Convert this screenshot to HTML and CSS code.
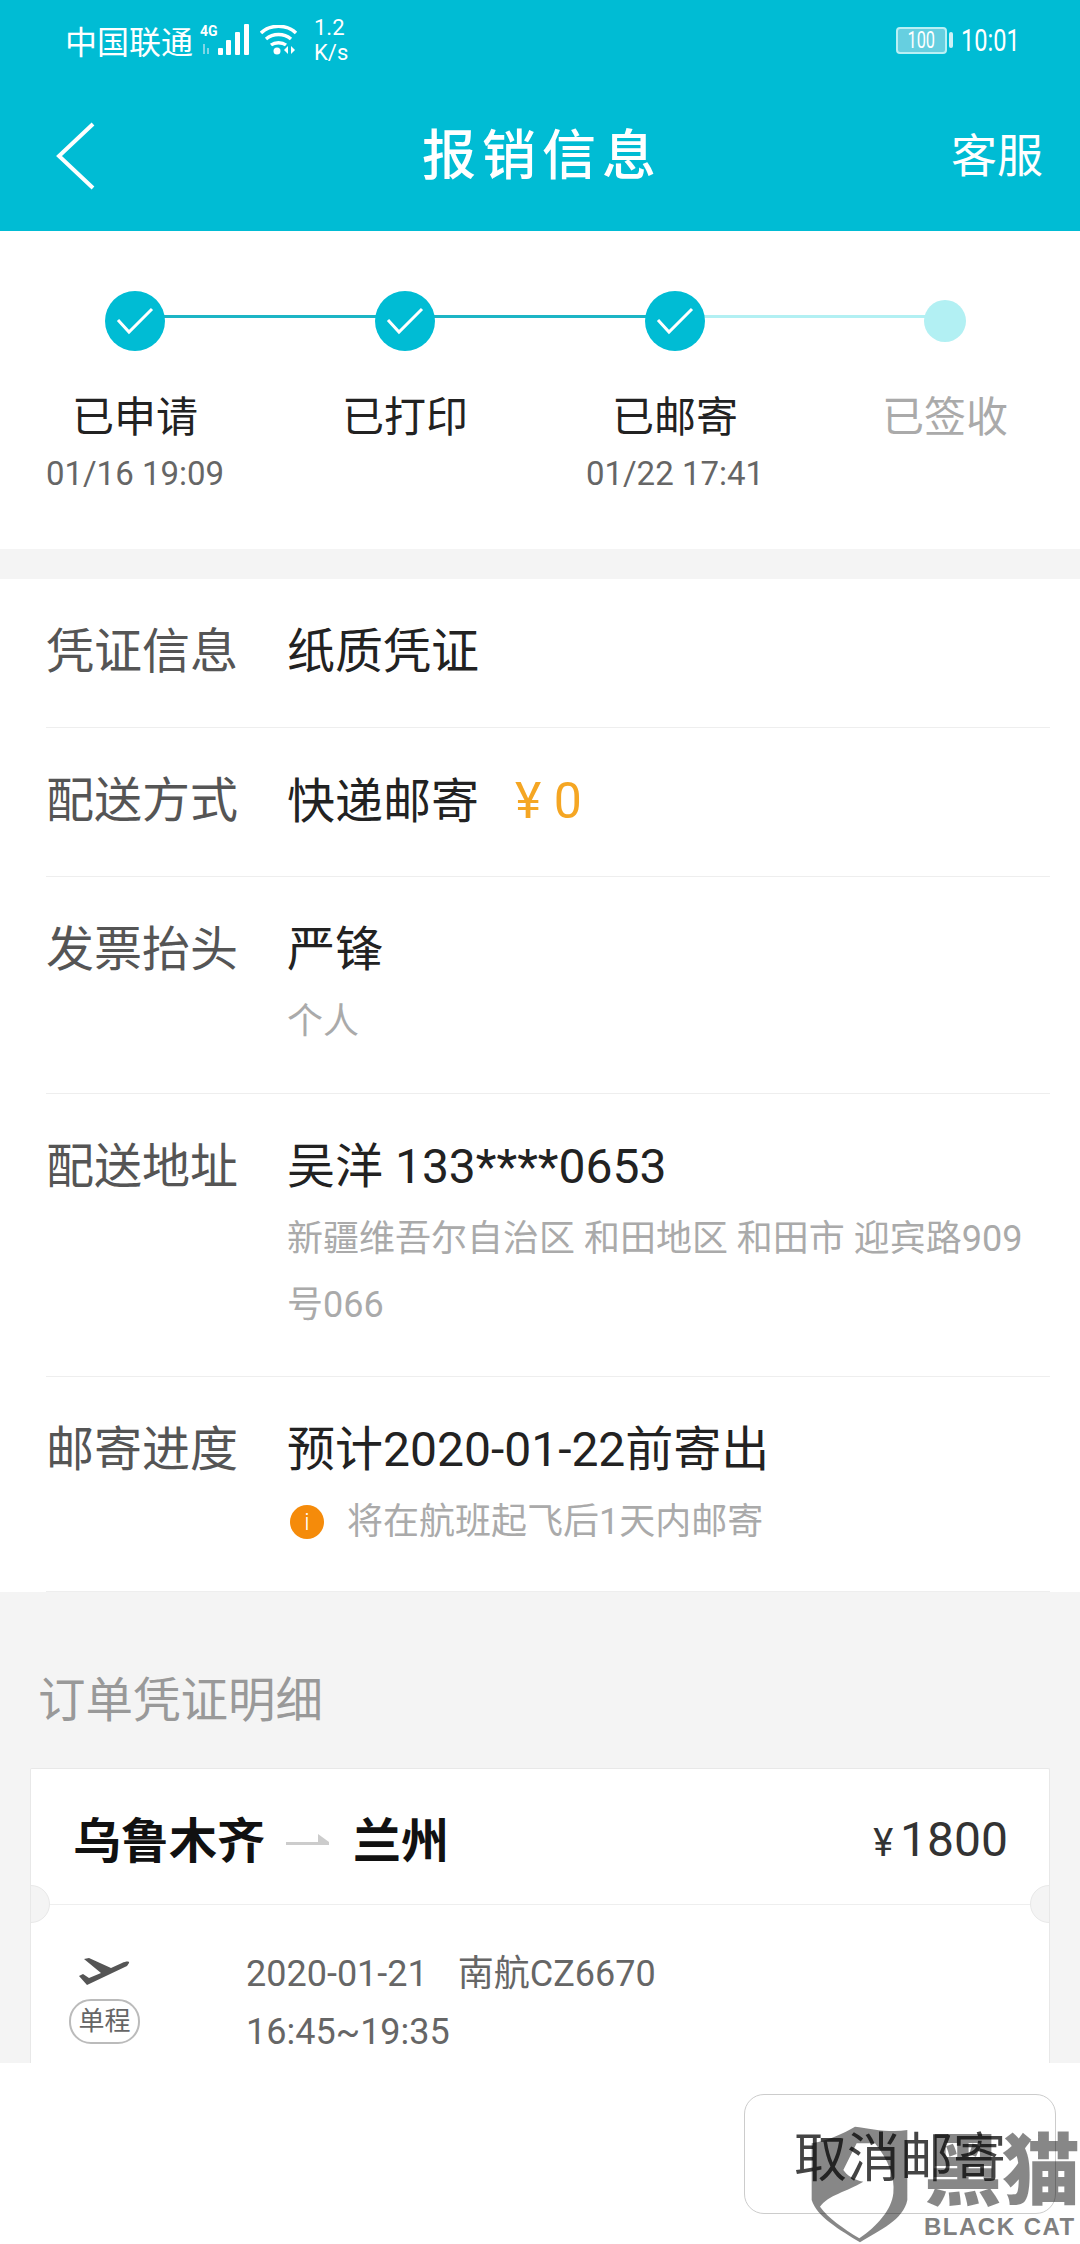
FILE: index.html
```html
<!DOCTYPE html>
<html lang="zh-CN">
<head>
    <meta charset="UTF-8">
    <meta name="viewport" content="width=device-width, initial-scale=1.0">
    <title>报销信息</title>
    <link rel="stylesheet" href="styles.css">
</head>
<body>
    <div class="page">
        <header class="top">
            <div class="status">
                <div class="status-left">
                    <span class="carrier">中国联通</span>
                    <svg class="signal" width="52" height="34" viewBox="0 0 52 34">
                        <text x="1" y="13" class="net">4G</text>
                        <path d="M4 21h2v10H4zM8 25h2v6H8z" fill="#7fd6e6"/>
                        <rect x="19" y="25" width="5" height="7" rx="1" fill="#fff"/>
                        <rect x="27" y="17" width="5" height="15" rx="1" fill="#fff"/>
                        <rect x="36" y="9" width="5" height="23" rx="1" fill="#fff"/>
                        <rect x="45" y="1" width="5" height="31" rx="1" fill="#fff"/>
                    </svg>
                    <svg class="wifi" width="38" height="30" viewBox="0 0 38 30">
                        <path d="M1 8C10-1 27-1 36 8M6 14c7-6 18-6 25 0M11 20c4-3 11-3 15 0" fill="none" stroke="#fff" stroke-width="3.4"/>
                        <circle cx="17" cy="26" r="3.5" fill="#fff"/>
                        <path d="M28 21v8l-4-4zM31 21v8l4-4z" fill="#fff"/>
                    </svg>
                    <div class="speed"><span>1.2</span><span>K/s</span></div>
                </div>
                <div class="status-right">
                    <div class="battery"><span>100</span></div>
                    <span class="battery-tip"></span>
                    <span class="clock">10:01</span>
                </div>
            </div>
            <div class="nav">
                <svg class="back" width="40" height="68" viewBox="0 0 40 68">
                    <path d="M37 2L3 34l34 32" fill="none" stroke="#fff" stroke-width="4"/>
                </svg>
                <h1 class="nav-title">报销信息</h1>
                <span class="nav-link">客服</span>
            </div>
        </header>

        <section class="steps">
            <div class="step done">
                <div class="dot-row">
                    <span class="dot"><svg width="38" height="28" viewBox="0 0 38 28"><path d="M2 13l11 12L36 2" fill="none" stroke="#fff" stroke-width="3"/></svg></span>
                </div>
                <div class="step-name">已申请</div>
                <div class="step-time">01/16 19:09</div>
            </div>
            <div class="step done">
                <div class="dot-row">
                    <span class="dot"><svg width="38" height="28" viewBox="0 0 38 28"><path d="M2 13l11 12L36 2" fill="none" stroke="#fff" stroke-width="3"/></svg></span>
                </div>
                <div class="step-name">已打印</div>
            </div>
            <div class="step done next-off">
                <div class="dot-row">
                    <span class="dot"><svg width="38" height="28" viewBox="0 0 38 28"><path d="M2 13l11 12L36 2" fill="none" stroke="#fff" stroke-width="3"/></svg></span>
                </div>
                <div class="step-name">已邮寄</div>
                <div class="step-time">01/22 17:41</div>
            </div>
            <div class="step off">
                <div class="dot-row"><span class="dot"></span></div>
                <div class="step-name">已签收</div>
            </div>
        </section>

        <section class="info">
            <div class="row">
                <div class="row-label">凭证信息</div>
                <div class="row-body"><div class="row-value">纸质凭证</div></div>
            </div>
            <div class="row">
                <div class="row-label">配送方式</div>
                <div class="row-body"><div class="row-value">快递邮寄<span class="fee">¥ 0</span></div></div>
            </div>
            <div class="row">
                <div class="row-label">发票抬头</div>
                <div class="row-body">
                    <div class="row-value">严锋</div>
                    <div class="row-sub">个人</div>
                </div>
            </div>
            <div class="row">
                <div class="row-label">配送地址</div>
                <div class="row-body">
                    <div class="row-value">吴洋 133****0653</div>
                    <div class="row-sub">新疆维吾尔自治区 和田地区 和田市 迎宾路909号066</div>
                </div>
            </div>
            <div class="row">
                <div class="row-label">邮寄进度</div>
                <div class="row-body">
                    <div class="row-value">预计2020-01-22前寄出</div>
                    <div class="row-sub notice"><span class="info-icon">i</span>将在航班起飞后1天内邮寄</div>
                </div>
            </div>
        </section>

        <section class="detail">
            <h2 class="detail-title">订单凭证明细</h2>
            <div class="card">
                <div class="card-head">
                    <div class="route">
                        <span>乌鲁木齐</span>
                        <svg class="route-arrow" width="44" height="12" viewBox="0 0 44 12"><path d="M0 8h32V0l11 8v3H0z" fill="#ccc"/></svg>
                        <span>兰州</span>
                    </div>
                    <div class="price"><span class="yen">¥</span>1800</div>
                </div>
                <div class="card-body">
                    <div class="trip-type">
                        <svg width="54" height="30" viewBox="0 0 54 30">
                            <path d="M51 6L49 9 9 28 1 19 5 17 11 21 23 16 6 2 11 1 33 11 44 6C48 4 52 4 51 6Z" fill="#555"/>
                        </svg>
                        <span class="pill">单程</span>
                    </div>
                    <div class="trip-text">
                        <div><span class="trip-date">2020-01-21</span>南航CZ6670</div>
                        <div>16:45~19:35</div>
                    </div>
                </div>
            </div>
        </section>

        <footer class="bottom">
            <button class="cancel">取消邮寄</button>
        </footer>

        <div class="watermark">
            <svg class="mark-shield" width="130" height="134" viewBox="0 0 390 402">
                <path fill-rule="evenodd" d="M35 100C90 90 130 70 165 50 210 55 270 70 322 60V270C310 330 240 360 180 397 120 360 50 320 35 270ZM170 100L225 100C265 150 285 200 280 250 275 300 230 350 178 385 130 355 85 325 60 290 85 255 140 245 190 215 160 210 140 195 130 180Z" fill="rgba(0,0,0,.47)"/>
            </svg>
            <div class="mark-text">
                <div class="mark-cn">黑猫</div>
                <div class="mark-en">BLACK CAT</div>
            </div>
        </div>
    </div>
</body>
</html>
```

FILE: styles.css
```css
* {
    box-sizing: border-box;
}

body {
    margin: 0;
    background: #fff;
    font-family: Roboto, "Noto Sans CJK SC", sans-serif;
}

.page {
    position: relative;
    width: 1080px;
    height: 2244px;
    overflow: hidden;
    display: flex;
    flex-direction: column;
    background: #f4f4f4;
}

/* header */
.top {
    height: 231px;
    background: #00bcd4;
    color: #fff;
    flex-shrink: 0;
}

.status {
    height: 80px;
    display: flex;
    justify-content: space-between;
    align-items: center;
    padding: 0 59px 0 65px;
}

.status-left,
.status-right {
    display: flex;
    align-items: center;
}

.carrier {
    font-size: 32px;
    width: 134px;
    font-family: "Noto Sans CJK SC", sans-serif;
}

.net {
    font: bold 14px Roboto, sans-serif;
    fill: #fff;
}

.wifi {
    margin-left: 9px;
}

.speed {
    display: flex;
    flex-direction: column;
    margin-left: 16px;
    font-size: 22px;
    line-height: 25px;
}

.battery {
    width: 51px;
    height: 27px;
    border: 2px solid #b8f0f5;
    border-radius: 4px;
    background: #66cfe0;
    display: flex;
    align-items: center;
    justify-content: center;
    font-size: 24px;
}

.battery span {
    display: inline-block;
    transform: scaleX(0.68);
}

.battery-tip {
    width: 4px;
    height: 16px;
    margin-left: 2px;
    border-radius: 2px;
    background: #cdf1f6;
}

.clock {
    font-size: 31px;
    margin-left: 8px;
    width: 60px;
    display: inline-block;
    transform: scaleX(0.76);
    transform-origin: left center;
    white-space: nowrap;
}

.nav {
    height: 151px;
    display: flex;
    align-items: center;
    justify-content: space-between;
    padding: 0 37px 0 56px;
}

.nav-title {
    margin: 0 0 8px 37px;
    font-size: 54px;
    font-weight: 500;
    letter-spacing: 6px;
}

.nav-link {
    margin-bottom: 8px;
    font-size: 46px;
}

/* progress */
.steps {
    height: 318px;
    background: #fff;
    display: flex;
    padding: 60px 0 0;
    flex-shrink: 0;
}

.step {
    width: 270px;
    display: flex;
    flex-direction: column;
    align-items: center;
}

.dot-row {
    position: relative;
    width: 100%;
    height: 60px;
    display: flex;
    align-items: center;
    justify-content: center;
}

.done .dot-row::after {
    content: "";
    position: absolute;
    left: 50%;
    top: 24px;
    width: 100%;
    height: 3px;
    background: #1cb5c5;
}

.next-off .dot-row::after {
    background: #b2f0f3;
}

.dot {
    position: relative;
    z-index: 1;
    display: flex;
    align-items: center;
    justify-content: center;
    width: 60px;
    height: 60px;
    border-radius: 50%;
    background: #00bcd4;
}

.off .dot {
    width: 42px;
    height: 42px;
    background: #b2f0f3;
}

.step-name {
    margin-top: 40px;
    font-size: 42px;
    line-height: 54px;
    color: #222;
}

.off .step-name {
    color: #aaa;
}

.step-time {
    margin-top: 10px;
    font-size: 33px;
    line-height: 38px;
    color: #666;
}

/* info rows */
.info {
    margin-top: 30px;
    background: #fff;
    padding: 0 30px 0 46px;
    flex-shrink: 0;
}

.row {
    display: flex;
    min-height: 149px;
    padding: 40px 0 38px;
    border-bottom: 1px solid #eee;
}

.row:last-child {
    padding-bottom: 36px;
}

.row-label {
    width: 241px;
    font-size: 48px;
    line-height: 66px;
    color: #555;
    flex-shrink: 0;
}

.row-body {
    padding-right: 14px;
}

.row-value {
    font-size: 48px;
    line-height: 66px;
    color: #222;
    white-space: nowrap;
}

.fee {
    margin-left: 36px;
    color: #f5a623;
    font-size: 50px;
}

.row-sub {
    margin-top: 6px;
    font-size: 36px;
    line-height: 66px;
    color: #aaa;
}

.notice {
    display: flex;
    align-items: center;
    white-space: nowrap;
}

.info-icon {
    width: 34px;
    height: 34px;
    margin: 0 23px 0 3px;
    border-radius: 50%;
    background: #f58b0a;
    color: #fff;
    font-size: 24px;
    font-weight: 300;
    line-height: 34px;
    text-align: center;
}

/* order detail */
.detail {
    flex: 1;
    min-height: 0;
    overflow: hidden;
    padding: 0 30px;
}

.detail-title {
    margin: 76px 0 34px 8px;
    font-size: 47.5px;
    line-height: 66px;
    font-weight: 400;
    color: #999;
}

.card {
    position: relative;
    overflow: hidden;
    background: #fff;
    border: 1px solid #e8e8e8;
    border-bottom: none;
    border-radius: 2px 2px 0 0;
}

.card-head {
    position: relative;
    height: 136px;
    display: flex;
    align-items: center;
    justify-content: space-between;
    padding: 6px 41px 0 42px;
    border-bottom: 1px solid #eee;
}

.card-head::before,
.card-head::after {
    content: "";
    position: absolute;
    bottom: -19px;
    width: 36px;
    height: 36px;
    border-radius: 50%;
    border: 1px solid #e8e8e8;
    background: #f4f4f4;
}

.card-head::before {
    left: -19px;
}

.card-head::after {
    right: -19px;
}

.route {
    display: flex;
    align-items: center;
    margin-top: -6px;
    font-size: 48px;
    font-weight: 700;
    color: #111;
}

.route-arrow {
    margin: 6px 23px 0 21px;
}

.price {
    font-size: 48px;
    color: #333;
    display: flex;
    align-items: baseline;
}

.yen {
    font-size: 38px;
    margin-right: 7px;
}

.card-body {
    display: flex;
    height: 240px;
    padding: 52px 0 0 38px;
}

.trip-type {
    width: 71px;
    display: flex;
    flex-direction: column;
    align-items: center;
    gap: 12px;
}

.pill {
    width: 71px;
    height: 45px;
    border: 2px solid #bbb;
    border-radius: 22px;
    font-size: 26px;
    line-height: 40px;
    text-align: center;
    color: #666;
}

.trip-text {
    margin: -12px 0 0 106px;
    font-size: 36px;
    line-height: 58px;
    color: #666;
}

.trip-date {
    margin-right: 30px;
}

/* footer */
.bottom {
    height: 181px;
    background: #fff;
    display: flex;
    justify-content: flex-end;
    align-items: flex-start;
    padding: 31px 24px 0 0;
    flex-shrink: 0;
}

.cancel {
    width: 312px;
    height: 120px;
    border: 1px solid #ccc;
    border-radius: 20px;
    background: #fff;
    font-family: inherit;
    font-size: 53px;
    color: #444;
    padding: 0;
}

/* watermark */
.watermark {
    position: absolute;
    left: 800px;
    top: 2110px;
    width: 280px;
    height: 134px;
    display: flex;
    pointer-events: none;
}

.mark-shield {
    flex-shrink: 0;
}

.mark-text {
    margin: 21px 0 0 -6px;
}

.mark-cn {
    font-size: 78px;
    line-height: 84px;
    font-weight: 900;
    color: rgba(0, 0, 0, 0.47);
    white-space: nowrap;
}

.mark-en {
    font-family: "Liberation Sans", sans-serif;
    font-size: 24px;
    line-height: 24px;
    font-weight: 700;
    letter-spacing: 1.5px;
    color: #808080;
    white-space: nowrap;
}
```
